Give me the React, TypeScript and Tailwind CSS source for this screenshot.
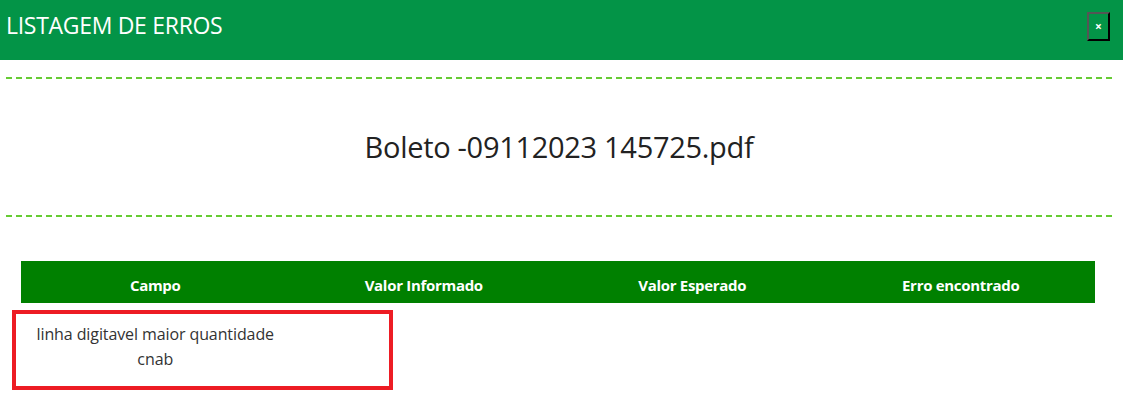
export default function App() {
  const columns = ["Campo", "Valor Informado", "Valor Esperado", "Erro encontrado"];

  return (
    <div className="relative w-[1123px] h-[406px] bg-white overflow-hidden font-['Open_Sans','Liberation_Sans',sans-serif]">
      <div className="h-[60px] bg-[#039447] flex items-start justify-between pl-[6px] pr-[13px] pt-[10px]">
        <h1 className="text-white text-[23px] leading-[30px] tracking-[-0.3px]">LISTAGEM DE ERROS</h1>
        <button className="mt-[2px] w-[23px] h-[29px] border-2 border-l-[#555] border-t-[#555] border-r-black border-b-black flex items-center justify-center text-white text-[12px] font-bold leading-none">
          ×
        </button>
      </div>

      <div className="px-[6px] pr-[11px]">
        <div className="mt-[17px] h-[2px] bg-[repeating-linear-gradient(90deg,#66cc33_0_6px,transparent_6px_10px)]" />
        <div className="h-[136px] flex items-center justify-center">
          <h2 className="text-[29px] text-[#222] tracking-[-0.3px]">Boleto -09112023 145725.pdf</h2>
        </div>
        <div className="h-[2px] bg-[repeating-linear-gradient(90deg,#66cc33_0_6px,transparent_6px_10px)]" />
      </div>

      <div className="mt-[44px] ml-[21px] w-[1074px]">
        <table className="w-full table-fixed border-collapse">
          <thead>
            <tr className="bg-[#008000] h-[42px]">
              {columns.map((c) => (
                <th key={c} className="text-white font-bold text-[15px] text-center pt-[6px] tracking-[-0.3px]">
                  {c}
                </th>
              ))}
            </tr>
          </thead>
          <tbody>
            <tr>
              <td className="text-center text-[16px] text-[#333] leading-[25px] px-[8px] pt-[19px] align-top tracking-[-0.1px]">
                linha digitavel maior quantidade cnab
              </td>
              <td />
              <td />
              <td />
            </tr>
          </tbody>
        </table>
      </div>

      <div className="absolute left-[12px] top-[310px] w-[381px] h-[80px] border-4 border-[#ed1c24]" />
    </div>
  );
}
